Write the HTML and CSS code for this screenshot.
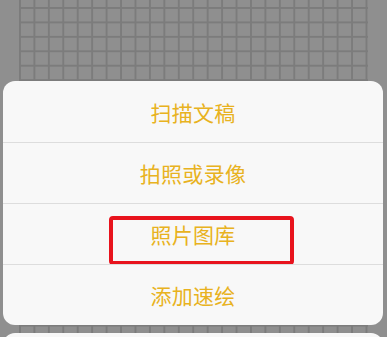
FILE: index.html
```html
<!DOCTYPE html>
<html lang="zh-CN">
<head>
<meta charset="utf-8">
<title>Action sheet</title>
<link rel="stylesheet" href="styles.css">
</head>
<body>
<div class="screen">
  <div class="grid"></div>
  <div class="sheet">
    <div class="row">扫描文稿</div>
    <div class="row">拍照或录像</div>
    <div class="row">照片图库<span class="highlight"></span></div>
    <div class="row">添加速绘</div>
  </div>
  <div class="cancel"></div>
</div>
</body>
</html>
```
FILE: styles.css
```css
html, body {
  margin: 0;
  padding: 0;
}
body {
  background: #8f8f8f;
  font-family: "Noto Sans CJK SC", "Noto Sans", sans-serif;
}
.screen {
  position: relative;
  width: 387px;
  height: 337px;
  overflow: hidden;
  background: #8f8f8f;
  box-sizing: border-box;
  padding: 81px 4px 0 3px;
  display: flex;
  flex-direction: column;
  gap: 8px;
}
.grid {
  position: absolute;
  left: 19px;
  top: 0;
  width: 349px;
  height: 337px;
  background-color: #8f8f8f;
  background-image:
    linear-gradient(to right, #7c7c7c 1.5px, transparent 1.5px),
    linear-gradient(to bottom, #7c7c7c 1.5px, transparent 1.5px);
  background-size: 14.45px 14.45px;
  background-position: 0 7px;
}
.sheet {
  position: relative;
  background: #f8f8f8;
  border-radius: 12px;
  display: flex;
  flex-direction: column;
  flex-shrink: 0;
}
.row {
  position: relative;
  height: 61px;
  display: flex;
  align-items: center;
  justify-content: center;
  color: #e8b220;
  font-size: 21px;
  letter-spacing: 0.3px;
  box-sizing: border-box;
}
.row + .row {
  border-top: 1px solid #dddddd;
}
.highlight {
  position: absolute;
  left: 106px;
  top: 12px;
  width: 185px;
  height: 49px;
  box-sizing: border-box;
  border: 4px solid #e8131d;
  border-radius: 4px;
}
.cancel {
  position: relative;
  height: 40px;
  flex-shrink: 0;
  background: #f8f8f8;
  border-radius: 12px;
}
```
